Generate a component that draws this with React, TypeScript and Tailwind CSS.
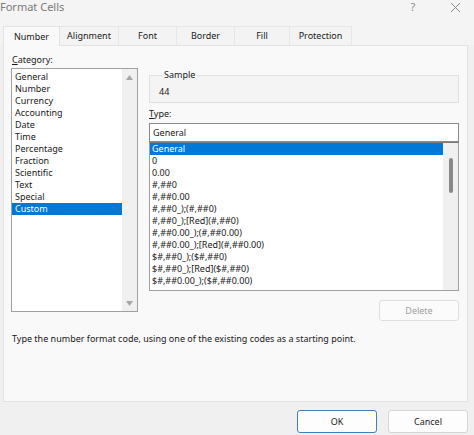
import React from 'react';

const categories = ['General', 'Number', 'Currency', 'Accounting', 'Date', 'Time', 'Percentage', 'Fraction', 'Scientific', 'Text', 'Special', 'Custom'];

const formats = [
  'General',
  '0',
  '0.00',
  '#,##0',
  '#,##0.00',
  '#,##0_);(#,##0)',
  '#,##0_);[Red](#,##0)',
  '#,##0.00_);(#,##0.00)',
  '#,##0.00_);[Red](#,##0.00)',
  '$#,##0_);($#,##0)',
  '$#,##0_);[Red]($#,##0)',
  '$#,##0.00_);($#,##0.00)',
];

const tabs = [
  { name: 'Number', w: 'w-[57px]' },
  { name: 'Alignment', w: 'w-[59px]' },
  { name: 'Font', w: 'w-[58px]' },
  { name: 'Border', w: 'w-[58px]' },
  { name: 'Fill', w: 'w-[55px]' },
  { name: 'Protection', w: 'w-[62px]' },
];

function Arrow({ up }: { up?: boolean }) {
  return (
    <svg width="7" height="5" viewBox="0 0 7 5">
      <path d={up ? 'M0 5 L3.5 0 L7 5 Z' : 'M0 0 L3.5 5 L7 0 Z'} fill="#a6a6a6" />
    </svg>
  );
}

function Close() {
  return (
    <svg width="11" height="11" viewBox="0 0 11 11">
      <path d="M1 1 L10 10 M10 1 L1 10" stroke="#8a8a8a" strokeWidth="1" />
    </svg>
  );
}

export default function App() {
  return (
    <div className="w-[474px] h-[435px] bg-[#f0f0f0] font-['Noto_Sans',sans-serif] text-[9px] leading-[12px] text-[#1a1a1a] overflow-hidden">
      {/* title bar */}
      <div className="h-[26px] bg-[#f4f4f4] flex items-start justify-between">
        <span className="text-[11px] leading-[14px] text-[#7a7a7a]">Format Cells</span>
        <div className="flex items-start text-[#8a8a8a]">
          <span className="text-[11px] leading-[14px] w-[14px] text-center mr-[30px]">?</span>
          <div className="mt-[2px] mr-[13px]">
            <Close />
          </div>
        </div>
      </div>

      {/* tabs */}
      <div className="flex pl-[3px] h-[19px] bg-[#f4f4f4]">
        {tabs.map((t, i) => (
          <div
            key={t.name}
            className={
              i === 0
                ? `${t.w} h-[20px] flex items-center justify-center bg-[#f9f9f9] border border-b-0 border-[#e3e3e3] relative z-10`
                : `${t.w} h-[19px] flex items-center justify-center border-r border-t border-[#e6e6e6] bg-[#f3f3f3]`
            }
          >
            {t.name}
          </div>
        ))}
      </div>

      {/* panel */}
      <div className="mx-[3px] w-[465px] h-[357px] bg-[#f9f9f9] border border-[#e3e3e3] pl-[7px] pr-[8px] pt-[8px]">
        <div className="flex gap-[11px]">
          {/* category */}
          <div className="w-[127px]">
            <div className="pl-[1px]">
              <span className="underline">C</span>ategory:
            </div>
            <div className="mt-[2px] h-[244px] bg-white border border-[#a0a0a0] flex">
              <div className="flex-1 pt-[2px]">
                {categories.map((c) => (
                  <div key={c} className={c === 'Custom' ? 'bg-[#0078d7] text-white pl-[3px]' : 'pl-[3px]'}>
                    {c}
                  </div>
                ))}
              </div>
              <div className="w-[15px] bg-[#f0f0f0] flex flex-col items-center justify-between pt-[6px] pb-[5px]">
                <Arrow up />
                <Arrow />
              </div>
            </div>
          </div>

          {/* type */}
          <div className="w-[310px] flex flex-col">
            <fieldset className="mt-[15px] border border-[#e0e0e0] pl-[9px] pt-[5px] pb-[4px] bg-[#f4f4f4]">
              <legend className="ml-[3px] px-[2px]">Sample</legend>
              <div>44</div>
            </fieldset>
            <div className="mt-[5px]">
              <span className="underline">T</span>ype:
            </div>
            <div className="mt-[3px] h-[19px] bg-white border border-[#8a8a8a] pl-[3px] flex items-center">General</div>
            <div className="h-[149px] bg-white border border-[#a0a0a0] border-t-[#7a7a7a] flex overflow-hidden">
              <div className="flex-1">
                {formats.map((f, i) => (
                  <div key={f} className={i === 0 ? 'bg-[#0078d7] text-white pl-[2px] whitespace-nowrap' : 'pl-[2px] whitespace-nowrap'}>
                    {f}
                  </div>
                ))}
              </div>
              <div className="w-[15px] bg-[#f0f0f0] flex justify-center pt-[15px]">
                <div className="w-[4px] h-[35px] bg-[#888888] rounded-[2px]" />
              </div>
            </div>
            <div className="self-end mt-[9px] w-[80px] h-[21px] bg-[#fbfbfb] border border-[#dedede] rounded-[3px] flex items-center justify-center text-[#a0a0a0]">
              Delete
            </div>
          </div>
        </div>
        <div className="mt-[12px] pl-[1px]">Type the number format code, using one of the existing codes as a starting point.</div>
      </div>

      {/* footer */}
      <div className="flex justify-end gap-[11px] pr-[6px] pt-[8px]">
        <div className="w-[80px] h-[23px] bg-[#fdfdfd] border border-[#3f7fc4] rounded-[3px] flex items-center justify-center">OK</div>
        <div className="w-[80px] h-[23px] bg-[#fdfdfd] border border-[#d6d6d6] rounded-[3px] flex items-center justify-center">Cancel</div>
      </div>
    </div>
  );
}
